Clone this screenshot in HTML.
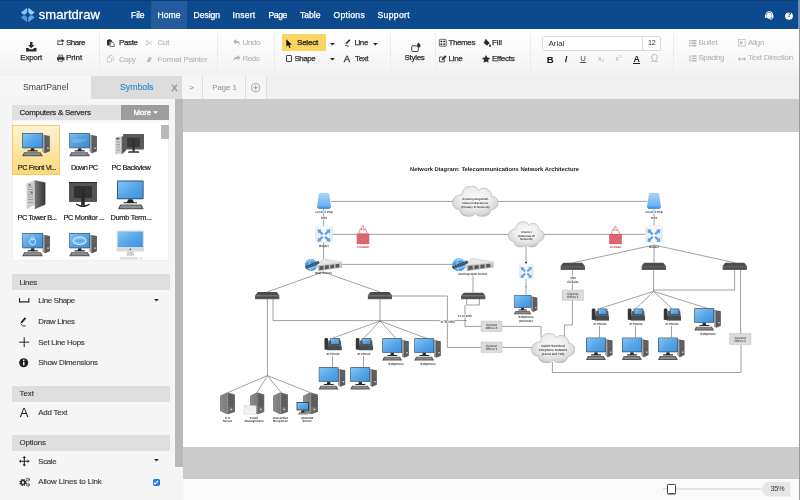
<!DOCTYPE html>
<html lang="en"><head><meta charset="utf-8"><title>SmartDraw - Network Diagram</title>
<style>
html,body{margin:0;padding:0;}
body{width:800px;height:500px;overflow:hidden;position:relative;background:#f5f5f5;font-family:"Liberation Sans",sans-serif;}
.b{position:absolute;display:block;}
.t{position:absolute;white-space:nowrap;}
#root{position:absolute;left:0;top:0;width:800px;height:500px;will-change:transform;}
svg{overflow:visible;}
</style></head><body><div id="root">
<div class="b" style="left:182.6px;top:98.8px;width:617.4px;height:380.2px;background:#cbcbcb;"></div>
<div class="b" style="left:182.6px;top:131.7px;width:616.2px;height:315.4px;background:#fff;"></div>
<div class="b" style="left:182.6px;top:479px;width:617.4px;height:21px;background:#fafafa;"></div>
<div class="b" style="left:663px;top:488.4px;width:101px;height:2px;background:#e3e3e3;"></div>
<div class="b" style="left:667.2px;top:483.8px;width:9px;height:10.4px;background:#fff;border:1px solid #444;border-radius:1.5px;box-sizing:border-box;box-shadow:0 0.5px 1px rgba(0,0,0,.4);"></div>
<svg class="b" style="left:760.5px;top:482.4px" width="29.5" height="14.6" viewBox="0 0 29.5 14.6"><path d="M4.6 0H29.5V14.6H4.6L0 7.3z" fill="#e6e6e6"/></svg>
<div class="t" style="left:770.60px;top:485.16px;font-size:7.4px;line-height:8.88px;color:#333;letter-spacing:-0.404px;">35%</div>
<div class="b" style="left:798.6px;top:28.5px;width:1.4px;height:471.5px;background:#9c9c9c;"></div>
<svg class="b" style="left:0;top:0" width="800" height="500" viewBox="0 0 800 500"><defs>
<linearGradient id="gScr" x1="0" y1="0" x2="1" y2="1"><stop offset="0" stop-color="#86c4f6"/><stop offset="0.5" stop-color="#57a7e8"/><stop offset="1" stop-color="#3f90da"/></linearGradient>
<linearGradient id="gTow2" x1="0" y1="0" x2="1" y2="0"><stop offset="0" stop-color="#7a7a7a"/><stop offset="1" stop-color="#333"/></linearGradient>
<linearGradient id="gTow" x1="0" y1="0" x2="1" y2="0"><stop offset="0" stop-color="#3c3c3c"/><stop offset="0.45" stop-color="#6a6a6a"/><stop offset="1" stop-color="#4a4a4a"/></linearGradient>
<linearGradient id="gSrv" x1="0" y1="0" x2="1" y2="0"><stop offset="0" stop-color="#b5b5b5"/><stop offset="0.45" stop-color="#8a8a8a"/><stop offset="0.5" stop-color="#606060"/><stop offset="1" stop-color="#7d7d7d"/></linearGradient>
<linearGradient id="gCloud" x1="0" y1="0" x2="0" y2="1"><stop offset="0" stop-color="#ffffff"/><stop offset="1" stop-color="#c9c9c9"/></linearGradient>
<linearGradient id="gPop" x1="0" y1="0" x2="0" y2="1"><stop offset="0" stop-color="#aad5fa"/><stop offset="1" stop-color="#5aa8ef"/></linearGradient>
<linearGradient id="gRtr" x1="0" y1="0" x2="1" y2="0"><stop offset="0" stop-color="#e6e9ec"/><stop offset="0.5" stop-color="#fafbfc"/><stop offset="1" stop-color="#e2e6e9"/></linearGradient>
<linearGradient id="gRack" x1="0" y1="0" x2="0" y2="1"><stop offset="0" stop-color="#d2d2d2"/><stop offset="1" stop-color="#a2a2a2"/></linearGradient>
<symbol id="pc" viewBox="0 0 29 25" preserveAspectRatio="none">
 <path d="M21 2.200L28.2 3.500V19L23.400 21.200 21 19.600z" fill="#5a5a5c"/>
 <path d="M21 2.200L22.800 2.500V20.600L21 19.600z" fill="#a4a4a4"/>
 <path d="M23.800 5.200h3.600M23.800 7h3.600M23.800 8.800h3.600M23.800 10.600h3.600" stroke="#707070" stroke-width="0.6"/>
 <rect x="25.500" y="15.300" width="1.500" height="1.300" fill="#d4e8f8"/>
 <rect x="0.300" y="0.400" width="20.800" height="15.600" rx="0.400" fill="#27425e"/>
 <rect x="0.900" y="1" width="19.600" height="14.400" fill="url(#gScr)"/>
 <path d="M9.400 16h2.800l0.700 2.200h3.100v1.200H5.700v-1.200h3z" fill="#2b2b2b"/>
 <path d="M2.200 20.100h16.600l2.400 4.100H0.200z" fill="#555"/>
 <path d="M3 20.800h15l1.300 2.300H1.900z" fill="#8a8a8a"/>
</symbol>
<symbol id="pcdown" viewBox="0 0 29 25" preserveAspectRatio="none">
 <path d="M21 2.200L28.2 3.500V19L23.400 21.200 21 19.600z" fill="#5a5a5c"/>
 <path d="M21 2.200L22.800 2.500V20.600L21 19.600z" fill="#a4a4a4"/>
 <path d="M23.800 5.200h3.600M23.800 7h3.600M23.800 8.800h3.600M23.800 10.600h3.600" stroke="#707070" stroke-width="0.6"/>
 <rect x="25.500" y="15.300" width="1.500" height="1.300" fill="#d4e8f8"/>
 <rect x="0.300" y="0.400" width="20.800" height="15.600" rx="0.400" fill="#3a4f66"/>
 <rect x="0.900" y="1" width="19.600" height="14.400" fill="url(#gScr)" opacity="0.9"/>
 <path d="M3.600 7.600h13M3.600 9.600h9" stroke="#9ccaf0" stroke-width="0.7"/>
 <path d="M9.400 16h2.800l0.700 2.200h3.100v1.200H5.700v-1.200h3z" fill="#2b2b2b"/>
 <path d="M2.200 20.100h16.600l2.400 4.100H0.200z" fill="#555"/>
 <path d="M3 20.800h15l1.300 2.300H1.900z" fill="#8a8a8a"/>
</symbol>

<symbol id="phone" viewBox="0 0 18 13" preserveAspectRatio="none">
 <path d="M4.800 3h12.200l1 9.600H3.600z" fill="#5c5f63"/>
 <path d="M4 8.200h13.600l0.400 4.400H3.600z" fill="#484b4f"/>
 <rect x="6.600" y="0.600" width="9.600" height="6.400" fill="#44484d"/>
 <rect x="7.400" y="1.300" width="8" height="5" fill="url(#gScr)"/>
 <path d="M0.800 1.200c0-1 3.600-1 3.600 0v10.200c0 1-3.600 1-3.600 0z" fill="#33363a"/>
 <path d="M0.400 5.400c-0.600 2 0.600 4 0 6.400" stroke="#c4c4c4" stroke-width="0.600" fill="none"/>
</symbol>
<symbol id="switch" viewBox="0 0 25 7.5" preserveAspectRatio="none">
 <path d="M3 0h19l3 3.6H0z" fill="#4a4c4e"/>
 <rect x="0" y="3.4" width="25" height="4.1" rx="0.4" fill="#5d5f61"/>
 <path d="M1.5 5.6h22" stroke="#3c3c3c" stroke-width="1" stroke-dasharray="1.4 0.5"/>
</symbol>
<symbol id="rack" viewBox="0 0 37.5 12.8" preserveAspectRatio="none">
 <path d="M12 6.600L18 0.300 37.200 3.700 37.200 4.400 12.800 7.400z" fill="#e6e6e6" stroke="#b4b4b4" stroke-width="0.350"/>
 <path d="M12.600 7.200L37.200 4.200V9.200L13.400 12.600z" fill="url(#gRack)"/>
 <path d="M14.600 7.860L18.400 7.390V10.990L14.600 11.530zM20 7.200L23.800 6.730V10.210L20 10.760zM25.400 6.540L29 6.100V9.470L25.400 9.980zM30.600 5.900L34.200 5.460V8.730L30.600 9.240z" fill="#565656"/>
 <circle cx="6.300" cy="6.500" r="6.200" fill="#469fec"/>
 <path d="M1 4.400c2.400-3.400 7-3.800 10-1.200M0.600 8.400c3 2 8.200 2 11.400-0.800M6.300 0.400c-2.600 3-2.600 9.400 0 12.400" stroke="#d4ebfc" stroke-width="0.700" fill="none"/>
 <path d="M0 8.200L13.600 2.400l1 2.400L1 10.600z" fill="#41454a"/>
 <path d="M1.800 8.800l11-4.700" stroke="#b4bcc4" stroke-width="0.500" stroke-dasharray="1 0.600"/>
</symbol>
<symbol id="router" viewBox="0 0 18 18" preserveAspectRatio="none">
 <path d="M0.300 2.200C0.300 -0.200 17.700 -0.200 17.700 2.200V15.800C17.700 18.200 0.300 18.200 0.300 15.800z" fill="url(#gRtr)" stroke="#e2e6ea" stroke-width="0.300"/>
 <ellipse cx="9" cy="2.200" rx="8.600" ry="1.800" fill="#f7f8fa" stroke="#e6e9ec" stroke-width="0.250"/>
 <path d="M7.700 9.300L4.400 6M10.100 9.300L13.400 6M7.700 11.700L4.400 15M10.100 11.700L13.400 15" stroke="#5aa2e6" stroke-width="2.300" fill="none"/>
 <path d="M2.500 4.100l4.200 0.500-3.700 3.700zM15.300 4.100l-4.200 0.500 3.700 3.700zM2.500 16.900l4.200-0.500-3.700-3.700zM15.300 16.900l-4.200-0.500 3.700-3.700z" fill="#5aa2e6"/>
</symbol>
<symbol id="pop" viewBox="0 0 14 16" preserveAspectRatio="none">
 <path d="M2 0.600Q2.200 0 2.800 0h8.400q0.600 0 0.800 0.600L14 13.400q0.200 1-0.600 1.400L12.400 16H1.600L0.600 14.800q-0.800-0.400-0.600-1.400z" fill="url(#gPop)"/>
 <path d="M0.200 13.800h13.600L12.400 16H1.600z" fill="#4a98e4"/>
</symbol>
<symbol id="fw" viewBox="0 0 13 19" preserveAspectRatio="none">
 <path d="M6.400 0.300c1.800 2.200-0.600 3.400 1 5 0.400-1.200 1.400-1.800 1.400-1.800 0 2.200 2.400 3.200 1.400 5.500H2.800C1.800 6.400 3.600 5.400 4 3.600c0.800 0.600 0.800 1.400 0.800 1.400C5.200 3.400 4.800 1.800 6.400 0.300z" fill="#fff" stroke="#dc5560" stroke-width="0.700"/>
 <rect x="0.200" y="8.400" width="12.600" height="10.400" fill="#db4f5b"/>
 <path d="M0.200 10.500h12.600M0.200 12.600h12.600M0.200 14.700h12.600M0.200 16.800h12.600" stroke="#eda3aa" stroke-width="0.320"/>
 <path d="M2.300 8.400v2.100M4.400 8.400v2.100M6.500 8.400v2.100M8.600 8.400v2.100M10.700 8.400v2.100M1.250 10.500v2.100M3.350 10.500v2.100M5.450 10.500v2.100M7.550 10.500v2.100M9.650 10.500v2.100M11.750 10.500v2.100M2.300 12.600v2.100M4.400 12.600v2.100M6.500 12.600v2.100M8.600 12.600v2.100M10.700 12.600v2.100M1.250 14.700v2.100M3.350 14.700v2.100M5.450 14.700v2.100M7.550 14.700v2.100M9.650 14.700v2.100M11.750 14.700v2.100M2.300 16.800v2M4.400 16.800v2M6.500 16.800v2M8.600 16.800v2M10.700 16.800v2" stroke="#eda3aa" stroke-width="0.320"/>
</symbol>
<symbol id="cloud" viewBox="0.300 -0.200 47.100 31.500" preserveAspectRatio="none">
 <path d="M8 24C-1 24 -3 10 10.500 8.800C11 -1.500 25 -2.500 27.300 4.800C30 0.500 40 1.500 40.500 10.500C49 11 49.500 23 39.750 24.300C39 31.500 27 33 24 28C21 32.500 9 32.500 8 24Z" fill="url(#gCloudR)" stroke="#a6a6a6" stroke-width="0.600"/>
</symbol>
<radialGradient id="gCloudR" cx="0.5" cy="0.42" r="0.62"><stop offset="0" stop-color="#fbfbfb"/><stop offset="0.5" stop-color="#efefef"/><stop offset="0.85" stop-color="#d6d6d6"/><stop offset="1" stop-color="#bababa"/></radialGradient>
<symbol id="tower" viewBox="0 0 15 22" preserveAspectRatio="none">
 <path d="M0 3.600L7.400 0.200 7.400 22 0 18.600z" fill="url(#gTwL)"/>
 <path d="M7.400 0.200L15 2.400V19.600L7.400 22z" fill="#6a6a6a"/>
 <path d="M8.600 3.200l5.200 1.400M8.600 5.200l5.200 1.300M8.600 7.200l5.200 1.200M8.600 9.200l5.200 1.100M8.600 11.200l5.200 1M8.600 13.200l5.200 0.900" stroke="#484848" stroke-width="0.800"/>
 <rect x="10.400" y="16.400" width="1.600" height="1.400" fill="#cfd6dc"/>
</symbol>
<linearGradient id="gTwL" x1="0" y1="0" x2="1" y2="0"><stop offset="0" stop-color="#8c8c8c"/><stop offset="1" stop-color="#7a7a7a"/></linearGradient>
</defs>
<path d="M331 201.4 L647 201.4 M333 234.4 L645 234.4 M323.6 209 L323.6 259 M654 209 L654 226 M342 264.4 L453 264.4 M323 272 L267 292 M323 272 L380 292 M473 275.5 L473 292.4 M267.4 299 L267.4 375.6 M267.4 375.6 L228 392.5 M267.4 375.6 L257 392.5 M267.4 375.6 L281 392.5 M267.4 375.6 L310 392.5 M273 299 L273 320.6 L467 320.6 M392 296 L447.4 296 L447.4 347.4 L481 347.4 M380 299 L380 321 M380 321 L333 338 M380 321 L364 338 M380 321 L396 338.5 M380 321 L427 338.5 M466.6 299 L466.6 305 L479.4 305 L479.4 299 M465 305 L465 326.4 L481 326.4 M502 326.4 L541 326.4 L541 337 M502 347.4 L532 347.4 M526 246 L526 264 M526 279 L526 295 M654 245 L573 262.8 M654 245 L654 262.8 M654 245 L735 262.8 M572.4 270 L572.4 290 M572.4 300 L572.4 325 L564.4 325 L564.4 337 M653.6 270 L653.6 291.4 M653.6 290 L734.6 290 L734.6 270 M653.6 291.4 L600 308.5 M653.6 291.4 L636 308.5 M653.6 291.4 L672 308.5 M653.6 291.4 L708 308.5 M740.6 270 L740.6 334 M741 344.6 L741 372.5 L552.4 372.5 L552.4 362 M599.5 326 L599.5 337.5 M635.5 326 L635.5 337.5 M671.5 326 L671.5 337.5 M332.5 356 L332.5 367.5 M363.5 356 L363.5 367.5" fill="none" stroke="#6e6e6e" stroke-width="0.65"/>
<use href="#cloud" x="452" y="185.7" width="46.50" height="31.10"/>
<use href="#cloud" x="507.8" y="221.2" width="36.80" height="26.30"/>
<use href="#cloud" x="531" y="333" width="44.20" height="30.20"/>
<use href="#pop" x="317" y="193" width="14.00" height="16.00"/>
<use href="#pop" x="647" y="193" width="14.00" height="16.00"/>
<use href="#router" x="315" y="225.4" width="18.00" height="17.40"/>
<use href="#router" x="645" y="225.2" width="18.00" height="17.80"/>
<use href="#router" x="518.6" y="263.4" width="15.40" height="15.60"/>
<use href="#fw" x="356.4" y="225" width="13.20" height="19.40"/>
<use href="#fw" x="609" y="225.6" width="13.00" height="18.80"/>
<use href="#rack" x="305" y="258.4" width="37.50" height="12.80"/>
<use href="#rack" x="452" y="258" width="42.00" height="13.20"/>
<use href="#switch" x="255" y="292" width="24.60" height="7.40"/>
<use href="#switch" x="367.6" y="292" width="24.60" height="7.40"/>
<use href="#switch" x="461" y="292.4" width="24.60" height="7.20"/>
<use href="#switch" x="560.4" y="262.6" width="24.60" height="7.40"/>
<use href="#switch" x="641.4" y="262.6" width="24.60" height="7.40"/>
<use href="#switch" x="722.4" y="262.6" width="24.60" height="7.40"/>
<rect x="525.300" y="261.800" width="1.400" height="1.400" fill="#111"/><rect x="525.400" y="286" width="1.200" height="1.200" fill="#5a9a4a"/>
<rect x="481" y="321" width="21.00" height="10.60" fill="#dcdcdc" stroke="#a8a8a8" stroke-width="0.5" stroke-dasharray="0.8 0.5"/>
<rect x="481" y="342" width="21.00" height="10.60" fill="#dcdcdc" stroke="#a8a8a8" stroke-width="0.5" stroke-dasharray="0.8 0.5"/>
<rect x="562" y="290" width="21.60" height="10.40" fill="#dcdcdc" stroke="#a8a8a8" stroke-width="0.5" stroke-dasharray="0.8 0.5"/>
<rect x="729.5" y="333.5" width="21.50" height="11.10" fill="#dcdcdc" stroke="#a8a8a8" stroke-width="0.5" stroke-dasharray="0.8 0.5"/>
<use href="#phone" x="591" y="308" width="18.20" height="12.80"/>
<use href="#phone" x="627" y="308" width="18.20" height="12.80"/>
<use href="#phone" x="663" y="308" width="18.20" height="12.80"/>
<use href="#phone" x="323.6" y="337.6" width="18.20" height="13.00"/>
<use href="#phone" x="355" y="337.6" width="18.20" height="13.00"/>
<use href="#pc" x="585.7" y="337.2" width="27.60" height="23.50"/>
<use href="#pc" x="621.7" y="337.2" width="27.60" height="23.50"/>
<use href="#pc" x="657.7" y="337.2" width="27.60" height="23.50"/>
<use href="#pc" x="694" y="308" width="27.60" height="23.20"/>
<use href="#pc" x="513.6" y="294.6" width="24.40" height="20.40"/>
<use href="#pc" x="382" y="338" width="27.60" height="23.20"/>
<use href="#pc" x="414" y="338" width="27.60" height="23.20"/>
<use href="#pc" x="318.4" y="367" width="27.60" height="23.20"/>
<use href="#pc" x="350" y="367" width="27.60" height="23.20"/>
<use href="#tower" x="220" y="392" width="15.00" height="22.40"/>
<use href="#tower" x="250" y="392" width="14.50" height="22.40"/>
<path d="M244 405.6h12.2v8.600H244z" fill="#f4f4f4" stroke="#c4c4c4" stroke-width="0.4"/><path d="M244 405.600l6.100 4.600 6.100-4.600" fill="none" stroke="#c4c4c4" stroke-width="0.4"/>
<use href="#tower" x="273" y="392" width="15.00" height="22.40"/>
<use href="#tower" x="303" y="392" width="15.00" height="22.40"/>
<rect x="296.6" y="402" width="12.4" height="8.400" fill="#26292c"/><rect x="297.300" y="402.700" width="11" height="7" fill="url(#gScr)"/><path d="M301.600 410.400h2.400l0.800 1.800h1.800v0.600h-7.600v-0.600h1.800z" fill="#222"/><path d="M298.600 413h8.800l1 1.600h-10.800z" fill="#888"/>
<g font-family="Liberation Sans, sans-serif" text-rendering="geometricPrecision" stroke="#fff" stroke-width="1.2" stroke-linejoin="round"><text x="324" y="213.12" font-size="3.1" font-weight="bold" fill="#3a3a3a" text-anchor="middle">Level 3 Pop</text><text x="324" y="219.12" font-size="3.1" font-weight="bold" fill="#3a3a3a" text-anchor="middle">DS3</text><text x="654" y="212.92" font-size="3.1" font-weight="bold" fill="#3a3a3a" text-anchor="middle">Level 3 Pop</text><text x="654" y="218.52" font-size="3.1" font-weight="bold" fill="#3a3a3a" text-anchor="middle">DS3</text><text x="464.5" y="316.72" font-size="3.1" font-weight="bold" fill="#3a3a3a" text-anchor="middle">T1 or DS3</text><text x="447.4" y="322.52" font-size="3.1" font-weight="bold" fill="#3a3a3a" text-anchor="middle">T1 or DS3</text><text x="573" y="279.12" font-size="3.1" font-weight="bold" fill="#3a3a3a" text-anchor="middle">PRI</text><text x="573" y="282.72" font-size="3.1" font-weight="bold" fill="#3a3a3a" text-anchor="middle">Circuits</text></g>
<g font-family="Liberation Sans, sans-serif" text-rendering="geometricPrecision"><text x="491.5" y="325.75" font-size="3.2" font-weight="bold" fill="#505050" text-anchor="middle">Central</text>
<text x="491.5" y="329.35" font-size="3.2" font-weight="bold" fill="#505050" text-anchor="middle">Office 2</text>
<text x="491.5" y="346.75" font-size="3.2" font-weight="bold" fill="#505050" text-anchor="middle">Central</text>
<text x="491.5" y="350.35" font-size="3.2" font-weight="bold" fill="#505050" text-anchor="middle">Office 1</text>
<text x="572.8" y="294.65" font-size="3.2" font-weight="bold" fill="#505050" text-anchor="middle">Central</text>
<text x="572.8" y="298.25" font-size="3.2" font-weight="bold" fill="#505050" text-anchor="middle">Office 1</text>
<text x="740.25" y="338.50" font-size="3.2" font-weight="bold" fill="#505050" text-anchor="middle">Central</text>
<text x="740.25" y="342.10" font-size="3.2" font-weight="bold" fill="#505050" text-anchor="middle">Office 2</text>
<text x="410" y="170.62" font-size="5.6" font-weight="bold" fill="#1a1a1a" text-anchor="start" textLength="169" lengthAdjust="spacingAndGlyphs">Network Diagram: Telecommunications Network Architecture</text>
<text x="324" y="213.12" font-size="3.1" font-weight="bold" fill="#3a3a3a" text-anchor="middle">Level 3 Pop</text>
<text x="324" y="219.12" font-size="3.1" font-weight="bold" fill="#3a3a3a" text-anchor="middle">DS3</text>
<text x="654" y="212.92" font-size="3.1" font-weight="bold" fill="#3a3a3a" text-anchor="middle">Level 3 Pop</text>
<text x="654" y="218.52" font-size="3.1" font-weight="bold" fill="#3a3a3a" text-anchor="middle">DS3</text>
<text x="324" y="246.72" font-size="3.1" font-weight="bold" fill="#3a3a3a" text-anchor="middle">Router</text>
<text x="654" y="247.52" font-size="3.1" font-weight="bold" fill="#3a3a3a" text-anchor="middle">Router</text>
<text x="363" y="247.92" font-size="3.1" font-weight="bold" fill="#b8323e" text-anchor="middle">Firewall</text>
<text x="615.5" y="247.52" font-size="3.1" font-weight="bold" fill="#b8323e" text-anchor="middle">Firewall</text>
<text x="323.5" y="274.12" font-size="3.1" font-weight="bold" fill="#3a3a3a" text-anchor="middle">Web Server</text>
<text x="473" y="275.12" font-size="3.1" font-weight="bold" fill="#3a3a3a" text-anchor="middle">Backup Web Server</text>
<text x="475.4" y="200.44" font-size="2.9" font-weight="bold" fill="#3a3a3a" text-anchor="middle">Existing MegaPath</text>
<text x="475.4" y="204.24" font-size="2.9" font-weight="bold" fill="#3a3a3a" text-anchor="middle">Network Backbone</text>
<text x="475.4" y="207.84" font-size="2.9" font-weight="bold" fill="#3a3a3a" text-anchor="middle">(Primary IP Network)</text>
<text x="526.4" y="233.44" font-size="2.9" font-weight="bold" fill="#3a3a3a" text-anchor="middle">Internet</text>
<text x="526.4" y="236.84" font-size="2.9" font-weight="bold" fill="#3a3a3a" text-anchor="middle">(Alternate IP</text>
<text x="526.4" y="240.24" font-size="2.9" font-weight="bold" fill="#3a3a3a" text-anchor="middle">Network)</text>
<text x="553" y="346.92" font-size="3.1" font-weight="bold" fill="#3a3a3a" text-anchor="middle">Public Switched</text>
<text x="553" y="350.72" font-size="3.1" font-weight="bold" fill="#3a3a3a" text-anchor="middle">Telephone Network</text>
<text x="553" y="354.52" font-size="3.1" font-weight="bold" fill="#3a3a3a" text-anchor="middle">(Local and Toll)</text>
<text x="464.5" y="316.72" font-size="3.1" font-weight="bold" fill="#3a3a3a" text-anchor="middle">T1 or DS3</text>
<text x="447.4" y="322.52" font-size="3.1" font-weight="bold" fill="#3a3a3a" text-anchor="middle">T1 or DS3</text>
<text x="573" y="279.12" font-size="3.1" font-weight="bold" fill="#3a3a3a" text-anchor="middle">PRI</text>
<text x="573" y="282.72" font-size="3.1" font-weight="bold" fill="#3a3a3a" text-anchor="middle">Circuits</text>
<text x="526" y="318.32" font-size="3.1" font-weight="bold" fill="#3a3a3a" text-anchor="middle">Softphone</text>
<text x="526" y="321.72" font-size="3.1" font-weight="bold" fill="#3a3a3a" text-anchor="middle">(Remote)</text>
<text x="600" y="325.12" font-size="3.1" font-weight="bold" fill="#3a3a3a" text-anchor="middle">IP Phone</text>
<text x="636" y="325.12" font-size="3.1" font-weight="bold" fill="#3a3a3a" text-anchor="middle">IP Phone</text>
<text x="672" y="325.12" font-size="3.1" font-weight="bold" fill="#3a3a3a" text-anchor="middle">IP Phone</text>
<text x="333" y="355.12" font-size="3.1" font-weight="bold" fill="#3a3a3a" text-anchor="middle">IP Phone</text>
<text x="364" y="355.12" font-size="3.1" font-weight="bold" fill="#3a3a3a" text-anchor="middle">IP Phone</text>
<text x="396" y="364.52" font-size="3.1" font-weight="bold" fill="#3a3a3a" text-anchor="middle">Softphone</text>
<text x="428" y="364.52" font-size="3.1" font-weight="bold" fill="#3a3a3a" text-anchor="middle">Softphone</text>
<text x="708" y="334.72" font-size="3.1" font-weight="bold" fill="#3a3a3a" text-anchor="middle">Softphone</text>
<text x="227.5" y="418.52" font-size="3.1" font-weight="bold" fill="#3a3a3a" text-anchor="middle">CTI</text>
<text x="227.5" y="421.92" font-size="3.1" font-weight="bold" fill="#3a3a3a" text-anchor="middle">Server</text>
<text x="254" y="418.52" font-size="3.1" font-weight="bold" fill="#3a3a3a" text-anchor="middle">Email</text>
<text x="254" y="421.92" font-size="3.1" font-weight="bold" fill="#3a3a3a" text-anchor="middle">Management</text>
<text x="280.5" y="418.52" font-size="3.1" font-weight="bold" fill="#3a3a3a" text-anchor="middle">Interactive</text>
<text x="280.5" y="421.92" font-size="3.1" font-weight="bold" fill="#3a3a3a" text-anchor="middle">Response</text>
<text x="307" y="418.52" font-size="3.1" font-weight="bold" fill="#3a3a3a" text-anchor="middle">ACD/IVR</text>
<text x="307" y="421.92" font-size="3.1" font-weight="bold" fill="#3a3a3a" text-anchor="middle">Server</text></g>
</svg>
<div class="b" style="left:0px;top:98.5px;width:182.6px;height:401.5px;background:#f5f5f5;"></div>
<div class="b" style="left:175.2px;top:98.5px;width:7.4px;height:368.1px;background:#b9b9b9;"></div>
<div class="b" style="left:12px;top:104.5px;width:109px;height:15.7px;background:#e0e0e0;"></div>
<div class="b" style="left:120.7px;top:104.5px;width:48.5px;height:15.7px;background:#9d9d9d;"></div>
<div class="t" style="left:19.50px;top:107.76px;font-size:7.9px;line-height:9.48px;color:#333;letter-spacing:-0.227px;-webkit-text-stroke:0.25px #333;">Computers &amp; Servers</div>
<div class="t" style="left:133.50px;top:107.72px;font-size:7.8px;line-height:9.36px;color:#fff;letter-spacing:-0.093px;-webkit-text-stroke:0.3px #fff;">More</div>
<svg class="b" style="left:152.6px;top:111px" width="5" height="2.8" viewBox="0 0 10 5"><path d="M0 0h10L5 5z" fill="#fff"/></svg>
<div class="b" style="left:12px;top:120.3px;width:157.2px;height:141px;background:linear-gradient(#f4f4f4,#fff 3.5px);border:1px solid #efefef;border-top:none;box-sizing:border-box;"></div>
<div class="b" style="left:161.3px;top:125.3px;width:7.4px;height:13.4px;background:#b9b9b9;"></div>
<div class="b" style="left:12.3px;top:124.6px;width:47.4px;height:50.4px;background:linear-gradient(#fdf3d3,#fbd97a);border:1px solid #f3c969;box-sizing:border-box;"></div>
<svg class="b" style="left:0;top:0" width="182" height="262" viewBox="0 0 182 262"><defs>
<linearGradient id="gScr" x1="0" y1="0" x2="1" y2="1"><stop offset="0" stop-color="#86c4f6"/><stop offset="0.5" stop-color="#57a7e8"/><stop offset="1" stop-color="#3f90da"/></linearGradient>
<linearGradient id="gTow2" x1="0" y1="0" x2="1" y2="0"><stop offset="0" stop-color="#7a7a7a"/><stop offset="1" stop-color="#333"/></linearGradient>
<linearGradient id="gTow" x1="0" y1="0" x2="1" y2="0"><stop offset="0" stop-color="#3c3c3c"/><stop offset="0.45" stop-color="#6a6a6a"/><stop offset="1" stop-color="#4a4a4a"/></linearGradient>
<linearGradient id="gSrv" x1="0" y1="0" x2="1" y2="0"><stop offset="0" stop-color="#b5b5b5"/><stop offset="0.45" stop-color="#8a8a8a"/><stop offset="0.5" stop-color="#606060"/><stop offset="1" stop-color="#7d7d7d"/></linearGradient>
<linearGradient id="gCloud" x1="0" y1="0" x2="0" y2="1"><stop offset="0" stop-color="#ffffff"/><stop offset="1" stop-color="#c9c9c9"/></linearGradient>
<linearGradient id="gPop" x1="0" y1="0" x2="0" y2="1"><stop offset="0" stop-color="#aad5fa"/><stop offset="1" stop-color="#5aa8ef"/></linearGradient>
<linearGradient id="gRtr" x1="0" y1="0" x2="1" y2="0"><stop offset="0" stop-color="#e6e9ec"/><stop offset="0.5" stop-color="#fafbfc"/><stop offset="1" stop-color="#e2e6e9"/></linearGradient>
<linearGradient id="gRack" x1="0" y1="0" x2="0" y2="1"><stop offset="0" stop-color="#d2d2d2"/><stop offset="1" stop-color="#a2a2a2"/></linearGradient>
<symbol id="pc" viewBox="0 0 29 25" preserveAspectRatio="none">
 <path d="M21 2.200L28.2 3.500V19L23.400 21.200 21 19.600z" fill="#5a5a5c"/>
 <path d="M21 2.200L22.800 2.500V20.600L21 19.600z" fill="#a4a4a4"/>
 <path d="M23.800 5.200h3.600M23.800 7h3.600M23.800 8.800h3.600M23.800 10.600h3.600" stroke="#707070" stroke-width="0.6"/>
 <rect x="25.500" y="15.300" width="1.500" height="1.300" fill="#d4e8f8"/>
 <rect x="0.300" y="0.400" width="20.800" height="15.600" rx="0.400" fill="#27425e"/>
 <rect x="0.900" y="1" width="19.600" height="14.400" fill="url(#gScr)"/>
 <path d="M9.400 16h2.800l0.700 2.200h3.100v1.200H5.700v-1.200h3z" fill="#2b2b2b"/>
 <path d="M2.200 20.100h16.600l2.400 4.100H0.200z" fill="#555"/>
 <path d="M3 20.800h15l1.300 2.300H1.900z" fill="#8a8a8a"/>
</symbol>
<symbol id="pcdown" viewBox="0 0 29 25" preserveAspectRatio="none">
 <path d="M21 2.200L28.2 3.500V19L23.400 21.200 21 19.600z" fill="#5a5a5c"/>
 <path d="M21 2.200L22.800 2.500V20.600L21 19.600z" fill="#a4a4a4"/>
 <path d="M23.800 5.200h3.600M23.800 7h3.600M23.800 8.800h3.600M23.800 10.600h3.600" stroke="#707070" stroke-width="0.6"/>
 <rect x="25.500" y="15.300" width="1.500" height="1.300" fill="#d4e8f8"/>
 <rect x="0.300" y="0.400" width="20.800" height="15.600" rx="0.400" fill="#3a4f66"/>
 <rect x="0.900" y="1" width="19.600" height="14.400" fill="url(#gScr)" opacity="0.9"/>
 <path d="M3.600 7.600h13M3.600 9.600h9" stroke="#9ccaf0" stroke-width="0.7"/>
 <path d="M9.400 16h2.800l0.700 2.200h3.100v1.200H5.700v-1.200h3z" fill="#2b2b2b"/>
 <path d="M2.200 20.100h16.600l2.400 4.100H0.200z" fill="#555"/>
 <path d="M3 20.800h15l1.300 2.300H1.900z" fill="#8a8a8a"/>
</symbol>
</defs>
<use href="#pc" x="21.9" y="132.6" width="28.7" height="24.4"/>
<use href="#pcdown" x="69" y="132.6" width="28.7" height="24.4"/>
<g>
<path d="M115.200 137.200l6.400-1v17.400l-6.400 0.800z" fill="#d2d2d2"/><path d="M121.600 136.200l4.400 0.600v13.800l-4.400 3.800z" fill="#585858"/>
<rect x="116.200" y="137.800" width="3.200" height="1.800" fill="#5a5a5a"/><path d="M116.400 142h3.600M116.400 144.500h3.600M116.400 147h3.600M116.400 150h3.600" stroke="#8c8c8c" stroke-width="0.700"/>
<rect x="123.100" y="133.900" width="20.900" height="15.500" rx="0.500" fill="#5a5a5a"/><rect x="127" y="137.500" width="13" height="9.700" fill="#3a3a3a"/>
<rect x="132.500" y="139" width="2.100" height="12.500" fill="#2c2c2c"/><path d="M128.600 151.200h10l0.700 1.500h-11.400z" fill="#2c2c2c"/></g>
<g>
<path d="M26.600 183.600l8-3.400 0.200 24.600-8.200 4.400z" fill="#cdcdcd"/><path d="M34.600 180.200l10.800 2.400v22l-10.600 4.600z" fill="url(#gTow2)"/>
<path d="M26.600 183.600l8-3.400 10.800 2.400-7.600 2.400z" fill="#8a8a8a" opacity="0.0"/>
<path d="M28 187h5M28 189.500h5M28 192h5M28 194.500h5M28 197h5M28 199.500h5M28 202.500h5" stroke="#8a8a8a" stroke-width="0.700"/>
<rect x="28.600" y="184.200" width="2.200" height="1.600" fill="#777"/><circle cx="31.800" cy="192.500" r="1.100" fill="#666"/></g>
<g>
<rect x="69" y="182.100" width="28" height="19.800" rx="0.600" fill="#555"/><rect x="69" y="182.100" width="28" height="1" fill="#2a2a2a"/><rect x="74" y="186" width="18" height="12" fill="#333"/>
<rect x="81.200" y="188" width="3.600" height="17.600" fill="#2b2b2b"/><path d="M76.200 203.600q3.400 1.600 5 1.600h3.600q1.600 0 4.800-1.600l0.300 1q-3.300 2.400-5.100 2.400h-3.600q-1.800 0-5.300-2.400z" fill="#2b2b2b"/></g>
<g>
<rect x="117" y="180.600" width="26.600" height="18.600" rx="0.600" fill="#27425e"/><rect x="117.800" y="181.400" width="25" height="17" fill="url(#gScr)"/>
<path d="M128.400 199.200h4l1.600 3h3v1.100h-13.400v-1.100h3.200z" fill="#222"/>
<path d="M120.2 204.600h21.200l2.400 4.600h-26z" fill="#5a5a5a"/><path d="M121.200 205.500h19.200l1.400 2.600h-22z" fill="#8e8e8e"/></g>
<use href="#pc" x="22" y="232.600" width="28.7" height="24.4"/>
<circle cx="32.6" cy="241.800" r="3" fill="none" stroke="#cfe6fa" stroke-width="1"/><circle cx="32.6" cy="238.400" r="1.4" fill="none" stroke="#cfe6fa" stroke-width="0.8"/>
<use href="#pc" x="69" y="232.600" width="28.7" height="24.4"/>
<ellipse cx="79.6" cy="240.800" rx="6.4" ry="3.6" fill="none" stroke="#d8e9f8" stroke-width="1.3"/><ellipse cx="79.6" cy="240.800" rx="4.2" ry="2" fill="none" stroke="#b8d4ee" stroke-width="0.7"/>
<g>
<rect x="116.6" y="230.4" width="27.4" height="21" rx="1" fill="#d9dadb"/><rect x="117.8" y="231.6" width="25" height="15.4" fill="url(#gScr)"/>
<circle cx="130.3" cy="249.2" r="0.8" fill="#444"/>
<path d="M127.4 251.4h5.8l1 4.4h-7.8z" fill="#cfcfcf"/><path d="M121 257.2h16.4l0.8 2h-18z" fill="#e2e2e2" stroke="#bbb" stroke-width="0.3"/>
<ellipse cx="141.2" cy="258.2" rx="1.4" ry="1" fill="#e8e8e8" stroke="#bbb" stroke-width="0.3"/></g>
</svg>
<div class="t" style="left:17.80px;top:163.76px;font-size:7.4px;line-height:8.88px;color:#222;letter-spacing:-0.420px;-webkit-text-stroke:0.2px #222;">PC Front Vi...</div>
<div class="t" style="left:70.90px;top:163.76px;font-size:7.4px;line-height:8.88px;color:#222;letter-spacing:-0.665px;-webkit-text-stroke:0.2px #222;">Down PC</div>
<div class="t" style="left:111.40px;top:163.76px;font-size:7.4px;line-height:8.88px;color:#222;letter-spacing:-0.399px;-webkit-text-stroke:0.2px #222;">PC Backview</div>
<div class="t" style="left:17.60px;top:213.76px;font-size:7.4px;line-height:8.88px;color:#222;letter-spacing:-0.469px;-webkit-text-stroke:0.2px #222;">PC Tower B...</div>
<div class="t" style="left:63.40px;top:213.76px;font-size:7.4px;line-height:8.88px;color:#222;letter-spacing:-0.288px;-webkit-text-stroke:0.2px #222;">PC Monitor ...</div>
<div class="t" style="left:110.40px;top:213.76px;font-size:7.4px;line-height:8.88px;color:#222;letter-spacing:-0.256px;-webkit-text-stroke:0.2px #222;">Dumb Term...</div>
<div class="b" style="left:12px;top:274.2px;width:158px;height:16px;background:#dedede;"></div>
<div class="t" style="left:19.50px;top:277.66px;font-size:7.9px;line-height:9.48px;color:#333;letter-spacing:-0.297px;-webkit-text-stroke:0.12px #333;">Lines</div>
<div class="b" style="left:12px;top:385.6px;width:158px;height:16px;background:#dedede;"></div>
<div class="t" style="left:19.50px;top:389.06px;font-size:7.9px;line-height:9.48px;color:#333;letter-spacing:-0.022px;-webkit-text-stroke:0.12px #333;">Text</div>
<div class="b" style="left:12px;top:435px;width:158px;height:16px;background:#dedede;"></div>
<div class="t" style="left:19.50px;top:438.46px;font-size:7.9px;line-height:9.48px;color:#333;letter-spacing:-0.118px;-webkit-text-stroke:0.12px #333;">Options</div>
<div class="t" style="left:38.30px;top:296.46px;font-size:7.9px;line-height:9.48px;color:#3a3a3a;letter-spacing:-0.338px;-webkit-text-stroke:0.15px #3a3a3a;">Line Shape</div>
<div class="t" style="left:38.30px;top:317.06px;font-size:7.9px;line-height:9.48px;color:#3a3a3a;letter-spacing:-0.312px;-webkit-text-stroke:0.15px #3a3a3a;">Draw Lines</div>
<div class="t" style="left:38.30px;top:337.76px;font-size:7.9px;line-height:9.48px;color:#3a3a3a;letter-spacing:-0.264px;-webkit-text-stroke:0.15px #3a3a3a;">Set Line Hops</div>
<div class="t" style="left:38.30px;top:358.36px;font-size:7.9px;line-height:9.48px;color:#3a3a3a;letter-spacing:-0.242px;-webkit-text-stroke:0.15px #3a3a3a;">Show Dimensions</div>
<div class="t" style="left:38.30px;top:407.86px;font-size:7.9px;line-height:9.48px;color:#3a3a3a;letter-spacing:-0.200px;-webkit-text-stroke:0.15px #3a3a3a;">Add Text</div>
<div class="t" style="left:38.30px;top:456.76px;font-size:7.9px;line-height:9.48px;color:#3a3a3a;letter-spacing:-0.352px;-webkit-text-stroke:0.15px #3a3a3a;">Scale</div>
<div class="t" style="left:38.30px;top:477.36px;font-size:7.9px;line-height:9.48px;color:#3a3a3a;letter-spacing:-0.102px;-webkit-text-stroke:0.15px #3a3a3a;">Allow Lines to Link</div>
<svg class="b" style="left:18.6px;top:298.4px" width="10.4" height="4.6" viewBox="0 0 21 9"><path d="M1 0v7.6h19V0" fill="none" stroke="#222" stroke-width="2.2"/></svg>
<svg class="b" style="left:19.4px;top:316.6px" width="9" height="10" viewBox="0 0 18 20">
<path d="M11.5 0.5l3 2.6-7.6 8.4-3.4 1 0.6-3.6z" fill="#222"/><path d="M3 13.5l4.6 4.4h5.6" fill="none" stroke="#222" stroke-width="1.8"/></svg>
<svg class="b" style="left:18.8px;top:337.2px" width="10.4" height="10.4" viewBox="0 0 21 21">
<path d="M10.5 0.5v7.5M10.5 13v7.5M0.5 10.5h7.5M13 10.5h7.5" stroke="#222" stroke-width="2"/><circle cx="10.5" cy="10.5" r="2.2" fill="#222"/></svg>
<svg class="b" style="left:19.4px;top:358.4px" width="9.4" height="9.4" viewBox="0 0 19 19"><circle cx="9.5" cy="9.5" r="9.2" fill="#222"/><rect x="8.2" y="8" width="2.8" height="7" fill="#fff"/><circle cx="9.6" cy="4.8" r="1.7" fill="#fff"/></svg>
<div class="t" style="left:19.66px;top:404.60px;font-size:13px;line-height:15.60px;color:#222;">A</div>
<svg class="b" style="left:18.6px;top:456.2px" width="10.6" height="10.6" viewBox="0 0 21 21">
<path d="M10.5 0l3.4 4h-2.3v5.4H17V7.1l4 3.4-4 3.4v-2.3h-5.4V17h2.3l-3.4 4-3.4-4h2.3v-5.4H4v2.3l-4-3.4 4-3.4v2.3h5.4V4H7.1z" fill="#222"/></svg>
<svg class="b" style="left:18.8px;top:477px" width="11.4" height="10" viewBox="0 0 23 20">
<circle cx="8" cy="11" r="5.6" fill="none" stroke="#222" stroke-width="3.2" stroke-dasharray="2.9 1.5"/><circle cx="8" cy="11" r="3.6" fill="none" stroke="#222" stroke-width="2.4"/>
<circle cx="18" cy="5" r="2.6" fill="none" stroke="#222" stroke-width="2.4" stroke-dasharray="1.6 1"/><circle cx="18" cy="15.6" r="2.6" fill="none" stroke="#222" stroke-width="2.4" stroke-dasharray="1.6 1"/></svg>
<svg class="b" style="left:154.4px;top:299.0px" width="4.8" height="2.4" viewBox="0 0 10 5"><path d="M0 0h10L5 5z" fill="#222"/></svg>
<svg class="b" style="left:154.4px;top:459.0px" width="4.8" height="2.4" viewBox="0 0 10 5"><path d="M0 0h10L5 5z" fill="#222"/></svg>
<div class="b" style="left:152.6px;top:478.6px;width:7.2px;height:7.2px;background:#2a86e8;border-radius:1.5px;border:0.5px solid #1f6fcb;box-sizing:border-box;"></div>
<svg class="b" style="left:153.4px;top:479.6px" width="5.6" height="5.2" viewBox="0 0 11 10"><path d="M1.5 5.2l2.8 2.8 5.4-6.4" fill="none" stroke="#fff" stroke-width="2"/></svg>
<div class="b" style="left:0px;top:0px;width:800px;height:28.5px;background:#0d498d;border-top:1px solid #0a3d79;box-sizing:border-box;"></div>
<div class="b" style="left:150.5px;top:1px;width:36.5px;height:27.5px;background:#235b9d;"></div>
<svg class="b" style="left:0;top:0" width="60" height="28" viewBox="0 0 60 28">
<path d="M27.2 7.7L20.8 12.4 23.3 14.6H25.4L27.2 12.3z" fill="#7fc6f8"/>
<path d="M28.3 7.7L34.7 12.4 32.2 14.6H30.1L28.3 12.3z" fill="#92d2fb"/>
<path d="M27.2 22.3L20.8 17.6 23.3 15.4H25.4L27.2 17.700z" fill="#4c9ddf"/>
<path d="M28.3 22.3L34.7 17.6 32.2 15.4H30.1L28.3 17.700z" fill="#5eaae8"/>
</svg>
<div class="t" style="left:38.80px;top:7.40px;font-size:13px;line-height:15.60px;color:#fff;letter-spacing:0.058px;-webkit-text-stroke:0.3px #fff;">smartdraw</div>
<div class="t" style="left:131.00px;top:10.04px;font-size:8.6px;line-height:10.32px;color:#fff;letter-spacing:-0.090px;-webkit-text-stroke:0.25px #fff;">File</div>
<div class="t" style="left:157.50px;top:10.04px;font-size:8.6px;line-height:10.32px;color:#fff;letter-spacing:0.015px;-webkit-text-stroke:0.25px #fff;">Home</div>
<div class="t" style="left:193.50px;top:10.04px;font-size:8.6px;line-height:10.32px;color:#fff;letter-spacing:-0.045px;-webkit-text-stroke:0.25px #fff;">Design</div>
<div class="t" style="left:232.50px;top:10.04px;font-size:8.6px;line-height:10.32px;color:#fff;letter-spacing:0.249px;-webkit-text-stroke:0.25px #fff;">Insert</div>
<div class="t" style="left:268.50px;top:10.04px;font-size:8.6px;line-height:10.32px;color:#fff;letter-spacing:-0.396px;-webkit-text-stroke:0.25px #fff;">Page</div>
<div class="t" style="left:300.00px;top:10.04px;font-size:8.6px;line-height:10.32px;color:#fff;letter-spacing:-0.012px;-webkit-text-stroke:0.25px #fff;">Table</div>
<div class="t" style="left:333.50px;top:10.04px;font-size:8.6px;line-height:10.32px;color:#fff;letter-spacing:0.266px;-webkit-text-stroke:0.25px #fff;">Options</div>
<div class="t" style="left:377.50px;top:10.04px;font-size:8.6px;line-height:10.32px;color:#fff;letter-spacing:0.340px;-webkit-text-stroke:0.25px #fff;">Support</div>
<svg class="b" style="left:763.6px;top:11px" width="10.4" height="9.4" viewBox="0 0 13 12">
<path d="M2.2 6.600 V5.4 A4.3 4.3 0 0 1 10.8 5.400 V6.600" fill="none" stroke="#fff" stroke-width="1.3"/>
<ellipse cx="6.5" cy="6.2" rx="3.3" ry="3.900" fill="#fff"/>
<rect x="1.1" y="5.2" width="2.100" height="3.6" rx="0.8" fill="#fff"/><rect x="9.8" y="5.2" width="2.100" height="3.6" rx="0.8" fill="#fff"/>
<path d="M10.8 8.600 Q10.8 10.900 7.5 11" fill="none" stroke="#fff" stroke-width="0.9"/>
</svg>
<svg class="b" style="left:785.2px;top:11.7px" width="8" height="8" viewBox="0 0 12 12">
<circle cx="6" cy="6" r="5.800" fill="#fff"/></svg>
<div class="t" style="left:786.94px;top:11.46px;font-size:7.4px;line-height:8.88px;color:#0a2a55;font-weight:bold;">?</div>
<div class="b" style="left:0px;top:28.5px;width:800px;height:48px;background:linear-gradient(#ffffff,#fbfbfb 40%,#f1f1f1);border-bottom:1px solid #c6c6c6;box-sizing:border-box;"></div>
<div class="b" style="left:98.5px;top:33px;width:1px;height:39px;background:#ebebeb;"></div>
<div class="b" style="left:216.5px;top:33px;width:1px;height:39px;background:#ebebeb;"></div>
<div class="b" style="left:273.5px;top:33px;width:1px;height:39px;background:#ebebeb;"></div>
<div class="b" style="left:390.0px;top:33px;width:1px;height:39px;background:#ebebeb;"></div>
<div class="b" style="left:434.5px;top:33px;width:1px;height:39px;background:#ebebeb;"></div>
<div class="b" style="left:529.5px;top:33px;width:1px;height:39px;background:#ebebeb;"></div>
<div class="b" style="left:673.0px;top:33px;width:1px;height:39px;background:#ebebeb;"></div>
<svg class="b" style="left:26px;top:41.5px" width="10.5" height="9.6" viewBox="0 0 21 19">
<path d="M8 0h5v6h4l-6.5 6.5L4 6h4z" fill="#2e2e2e"/><path d="M0 12h5l2 2.5h7l2-2.5h5v7H0z" fill="#2e2e2e"/></svg>
<div class="t" style="left:20.30px;top:52.90px;font-size:8px;line-height:9.60px;color:#2e2e2e;letter-spacing:-0.237px;-webkit-text-stroke:0.25px #2e2e2e;">Export</div>
<svg class="b" style="left:57px;top:39.3px" width="7.4" height="6" viewBox="0 0 15 12">
<path d="M1 3h5v1.6H2.6v5.8h7.8V8.2H12V12H1z" fill="#2e2e2e"/><path d="M9.5 0L15 3.4 9.5 6.8V4.6C7 4.6 5.6 5.6 4.6 7.6 4.8 4.4 6.6 2.4 9.5 2.2z" fill="#2e2e2e"/></svg>
<div class="t" style="left:65.90px;top:37.70px;font-size:8px;line-height:9.60px;color:#2e2e2e;letter-spacing:-0.470px;-webkit-text-stroke:0.25px #2e2e2e;">Share</div>
<svg class="b" style="left:57px;top:54.8px" width="7.4" height="6.6" viewBox="0 0 15 13">
<path d="M3.5 0h8v4h-8z" fill="none" stroke="#2e2e2e" stroke-width="1.4"/><path d="M0 4.5h15v6h-2.6V8H2.6v2.5H0z" fill="#2e2e2e"/><rect x="3.4" y="9" width="8.2" height="3.4" fill="none" stroke="#2e2e2e" stroke-width="1.3"/></svg>
<div class="t" style="left:65.90px;top:53.40px;font-size:8px;line-height:9.60px;color:#2e2e2e;letter-spacing:-0.050px;-webkit-text-stroke:0.25px #2e2e2e;">Print</div>
<svg class="b" style="left:107.1px;top:39.2px" width="7.5" height="7.5" viewBox="0 0 17 17">
<path d="M0 2h3V0.5h5V2h3v4H6v9H0z" fill="#2e2e2e"/><path d="M7.3 7.3h6l3 3V17h-9z" fill="none" stroke="#2e2e2e" stroke-width="1.5"/></svg>
<div class="t" style="left:119.00px;top:38.30px;font-size:8px;line-height:9.60px;color:#2e2e2e;letter-spacing:-0.371px;-webkit-text-stroke:0.25px #2e2e2e;">Paste</div>
<svg class="b" style="left:107.1px;top:55.3px" width="7.5" height="7.5" viewBox="0 0 17 17">
<path d="M5.5 0.8h6l3 3v8h-9z" fill="none" stroke="#b4b4b4" stroke-width="1.4"/><path d="M0.8 5h6l3 3v8h-9z" fill="#fafafa" stroke="#b4b4b4" stroke-width="1.4"/></svg>
<div class="t" style="left:119.00px;top:54.60px;font-size:8px;line-height:9.60px;color:#b4b4b4;letter-spacing:-0.519px;-webkit-text-stroke:0.1px #b4b4b4;">Copy</div>
<svg class="b" style="left:145px;top:40.4px" width="7.8" height="5.6" viewBox="0 0 17 15">
<circle cx="3" cy="3" r="2.2" fill="none" stroke="#b4b4b4" stroke-width="1.5"/><circle cx="3" cy="12" r="2.2" fill="none" stroke="#b4b4b4" stroke-width="1.5"/>
<path d="M4.8 4.4L16.5 12.5M4.8 10.6L16.5 2.5" stroke="#b4b4b4" stroke-width="1.5"/></svg>
<div class="t" style="left:157.50px;top:38.30px;font-size:8px;line-height:9.60px;color:#b4b4b4;letter-spacing:-0.283px;-webkit-text-stroke:0.1px #b4b4b4;">Cut</div>
<svg class="b" style="left:145.6px;top:55.8px" width="7.2" height="6.4" viewBox="0 0 17 17">
<path d="M8 1l7 5-2.2 3L5.8 4z" fill="#b4b4b4"/><path d="M5 5.5l6.6 4.7-1 5.4-9.6 0.2z" fill="#b4b4b4"/></svg>
<div class="t" style="left:157.50px;top:54.60px;font-size:8px;line-height:9.60px;color:#b4b4b4;letter-spacing:-0.208px;-webkit-text-stroke:0.1px #b4b4b4;">Format Painter</div>
<svg class="b" style="left:233px;top:39.2px" width="7.6" height="6.6" viewBox="0 0 15 13">
<path d="M6 0v3.2c5 0 8.4 2.6 8.6 9.4-1.6-3.6-4-5-8.6-5V11L0 5.5z" fill="#b4b4b4"/></svg>
<div class="t" style="left:242.50px;top:38.05px;font-size:8px;line-height:9.60px;color:#b4b4b4;letter-spacing:-0.381px;-webkit-text-stroke:0.1px #b4b4b4;">Undo</div>
<svg class="b" style="left:233px;top:54.8px" width="7.6" height="6.6" viewBox="0 0 15 13">
<path d="M9 0v3.2c-5 0-8.4 2.6-8.6 9.4 1.6-3.6 4-5 8.6-5V11L15 5.5z" fill="#b4b4b4"/></svg>
<div class="t" style="left:242.50px;top:53.55px;font-size:8px;line-height:9.60px;color:#b4b4b4;letter-spacing:-0.631px;-webkit-text-stroke:0.1px #b4b4b4;">Redo</div>
<div class="b" style="left:282.2px;top:34.2px;width:43.6px;height:16.6px;background:#fbd464;border-radius:1px;"></div>
<svg class="b" style="left:286px;top:38.6px" width="6.4" height="9.2" viewBox="0 0 9 13">
<path d="M0.5 0.3v10.6l2.5-2.3 1.7 4 1.7-0.7-1.7-3.9H8.3z" fill="#111"/></svg>
<div class="t" style="left:297.00px;top:38.05px;font-size:8px;line-height:9.60px;color:#111;letter-spacing:-0.206px;-webkit-text-stroke:0.25px #111;">Select</div>
<svg class="b" style="left:330.1px;top:43.199999999999996px" width="4.8" height="2.4" viewBox="0 0 10 5"><path d="M0 0h10L5 5z" fill="#222"/></svg>
<svg class="b" style="left:330.1px;top:58.4px" width="4.8" height="2.4" viewBox="0 0 10 5"><path d="M0 0h10L5 5z" fill="#222"/></svg>
<svg class="b" style="left:373.1px;top:42.8px" width="4.8" height="2.4" viewBox="0 0 10 5"><path d="M0 0h10L5 5z" fill="#222"/></svg>
<div class="b" style="left:286px;top:55.4px;width:6.2px;height:6.2px;background:#fff;border:0.8px solid #444;box-sizing:border-box;border-radius:1px;"></div>
<div class="t" style="left:294.50px;top:53.95px;font-size:8px;line-height:9.60px;color:#2e2e2e;letter-spacing:-0.507px;-webkit-text-stroke:0.25px #2e2e2e;">Shape</div>
<svg class="b" style="left:343.6px;top:39px" width="7" height="7.4" viewBox="0 0 14 15">
<path d="M10.5 0.5l2.5 2.2-6.8 7-3 0.8 0.6-3z" fill="#2e2e2e"/><path d="M2 12.8h4.5V15H9" fill="none" stroke="#2e2e2e" stroke-width="1.5"/></svg>
<div class="t" style="left:354.50px;top:37.70px;font-size:8px;line-height:9.60px;color:#2e2e2e;letter-spacing:-0.431px;-webkit-text-stroke:0.25px #2e2e2e;">Line</div>
<div class="t" style="left:343.80px;top:52.84px;font-size:9.6px;line-height:11.52px;color:#2e2e2e;-webkit-text-stroke:0.3px #2e2e2e;">A</div>
<div class="t" style="left:355.00px;top:53.80px;font-size:8px;line-height:9.60px;color:#2e2e2e;letter-spacing:-0.368px;-webkit-text-stroke:0.25px #2e2e2e;">Text</div>
<svg class="b" style="left:410.8px;top:42.4px" width="10.6" height="10.6" viewBox="0 0 24 25">
<rect x="1.2" y="9" width="15.5" height="13.5" rx="2.5" fill="none" stroke="#2e2e2e" stroke-width="2.2"/>
<path d="M17.5 0.5c2.5 3 5 5.6 5 8.6a5 5 0 0 1-10 0c0-3 2.5-5.6 5-8.6z" fill="#2e2e2e" stroke="#fafafa" stroke-width="1.2"/></svg>
<div class="t" style="left:404.50px;top:53.30px;font-size:8px;line-height:9.60px;color:#2e2e2e;letter-spacing:-0.298px;-webkit-text-stroke:0.25px #2e2e2e;">Styles</div>
<svg class="b" style="left:439px;top:39.2px" width="7.6" height="7.6" viewBox="0 0 15 15">
<rect x="0.7" y="0.7" width="13.6" height="13.6" rx="1.5" fill="none" stroke="#2e2e2e" stroke-width="1.4"/>
<circle cx="4.7" cy="4.7" r="1.9" fill="#2e2e2e"/><circle cx="10.3" cy="4.7" r="1.9" fill="#2e2e2e"/><circle cx="4.7" cy="10.3" r="1.9" fill="#2e2e2e"/><circle cx="10.3" cy="10.3" r="1.9" fill="#2e2e2e"/></svg>
<div class="t" style="left:448.50px;top:38.30px;font-size:8px;line-height:9.60px;color:#2e2e2e;letter-spacing:-0.400px;-webkit-text-stroke:0.25px #2e2e2e;">Themes</div>
<svg class="b" style="left:439px;top:55px" width="7.8" height="7.4" viewBox="0 0 15 14">
<path d="M10.5 8.5V13H1V3.8h6" fill="none" stroke="#2e2e2e" stroke-width="1.5"/><path d="M11.5 0.5l3 2.6-6.3 6.4-3 0.6 0.4-3z" fill="#2e2e2e"/></svg>
<div class="t" style="left:448.50px;top:54.35px;font-size:8px;line-height:9.60px;color:#2e2e2e;letter-spacing:-0.281px;-webkit-text-stroke:0.25px #2e2e2e;">Line</div>
<svg class="b" style="left:482.5px;top:38.6px" width="8" height="8.6" viewBox="0 0 16 17">
<path d="M6 0.5l7.5 7.3-5.6 5.8L1 7.2z" fill="#2e2e2e"/><path d="M5.4 0v5" stroke="#2e2e2e" stroke-width="1.6"/><path d="M14 10c1 1.6 2 2.8 2 4a2 2 0 0 1-4 0c0-1.2 1-2.4 2-4z" fill="#2e2e2e"/></svg>
<div class="t" style="left:492.00px;top:38.30px;font-size:8px;line-height:9.60px;color:#2e2e2e;letter-spacing:-0.055px;-webkit-text-stroke:0.25px #2e2e2e;">Fill</div>
<svg class="b" style="left:482.3px;top:55px" width="8.2" height="7.8" viewBox="0 0 20 19">
<path d="M10 0l3.1 6.3 6.9 1-5 4.9 1.2 6.8L10 15.8 3.8 19 5 12.2 0 7.3l6.9-1z" fill="#2e2e2e"/></svg>
<div class="t" style="left:492.00px;top:54.35px;font-size:8px;line-height:9.60px;color:#2e2e2e;letter-spacing:-0.258px;-webkit-text-stroke:0.25px #2e2e2e;">Effects</div>
<div class="b" style="left:542px;top:35.8px;width:118.8px;height:15px;background:#fff;border:1px solid #d9d9d9;box-sizing:border-box;border-radius:1.5px;"></div>
<div class="b" style="left:642px;top:36.3px;width:1px;height:14px;background:#dcdcdc;"></div>
<div class="t" style="left:548.50px;top:39.20px;font-size:8px;line-height:9.60px;color:#2e2e2e;letter-spacing:-0.001px;">Arial</div>
<div class="t" style="left:648.00px;top:39.38px;font-size:7.2px;line-height:8.64px;color:#2e2e2e;letter-spacing:-0.304px;">12</div>
<div class="t" style="left:546.73px;top:53.64px;font-size:9.6px;line-height:11.52px;color:#111;font-weight:bold;">B</div>
<div class="t" style="left:564.72px;top:53.88px;font-size:9.2px;line-height:11.04px;color:#111;font-style:italic;-webkit-text-stroke:0.25px #111;">I</div>
<div class="t" style="left:580.18px;top:54.32px;font-size:7.8px;line-height:9.36px;color:#444;text-decoration:underline;text-underline-offset:1px;">U</div>
<div class="t" style="left:598.00px;top:55.32px;font-size:6.8px;line-height:8.16px;color:#aaa;">x</div>
<div class="t" style="left:601.60px;top:59.00px;font-size:4px;line-height:4.80px;color:#aaa;">2</div>
<div class="t" style="left:615.50px;top:55.32px;font-size:6.8px;line-height:8.16px;color:#aaa;">x</div>
<div class="t" style="left:619.20px;top:54.80px;font-size:4px;line-height:4.80px;color:#aaa;">2</div>
<div class="t" style="left:633.42px;top:53.72px;font-size:8.8px;line-height:10.56px;color:#222;font-weight:bold;">A</div>
<div class="b" style="left:632.8px;top:62.8px;width:7.6px;height:1px;background:#222;"></div>
<div class="t" style="left:650.78px;top:53.00px;font-size:10px;line-height:12.00px;color:#b8b8b8;font-family:"Liberation Serif",serif;">Ω</div>
<svg class="b" style="left:688.5px;top:39.6px" width="7.6" height="6.4" viewBox="0 0 15 13">
<g fill="#b4b4b4"><rect x="0" y="0" width="3" height="3"/><rect x="0" y="5" width="3" height="3"/><rect x="0" y="10" width="3" height="3"/>
<rect x="4.5" y="0" width="10.5" height="3"/><rect x="4.5" y="5" width="10.5" height="3"/><rect x="4.5" y="10" width="10.5" height="3"/></g></svg>
<div class="t" style="left:698.50px;top:38.40px;font-size:8px;line-height:9.60px;color:#b4b4b4;letter-spacing:-0.169px;-webkit-text-stroke:0.1px #b4b4b4;">Bullet</div>
<svg class="b" style="left:688.5px;top:55.2px" width="7.6" height="6.8" viewBox="0 0 15 13">
<g fill="#b4b4b4"><path d="M2 0l2 2.6H2.8v7.8H4L2 13 0 10.4h1.2V2.6H0z"/>
<rect x="5.5" y="0.5" width="9.5" height="2.6"/><rect x="5.5" y="5.2" width="9.5" height="2.6"/><rect x="5.5" y="9.9" width="9.5" height="2.6"/></g></svg>
<div class="t" style="left:698.50px;top:53.40px;font-size:8px;line-height:9.60px;color:#b4b4b4;letter-spacing:-0.487px;-webkit-text-stroke:0.1px #b4b4b4;">Spacing</div>
<svg class="b" style="left:738px;top:39.2px" width="7.6" height="7.4" viewBox="0 0 15 15">
<rect x="0.7" y="0.7" width="13.6" height="13.6" fill="none" stroke="#b4b4b4" stroke-width="1.4"/><path d="M4 3.5l6 4-6 4z" fill="#b4b4b4"/></svg>
<div class="t" style="left:748.00px;top:38.40px;font-size:8px;line-height:9.60px;color:#b4b4b4;letter-spacing:-0.358px;-webkit-text-stroke:0.1px #b4b4b4;">Align</div>
<svg class="b" style="left:738px;top:56.6px" width="7.8" height="4" viewBox="0 0 16 8">
<path d="M0 4l4-4v3h8V0l4 4-4 4V5H4v3z" fill="#b4b4b4"/></svg>
<div class="t" style="left:748.00px;top:53.40px;font-size:8px;line-height:9.60px;color:#b4b4b4;letter-spacing:-0.247px;-webkit-text-stroke:0.1px #b4b4b4;">Text Direction</div>
<div class="b" style="left:0px;top:76.4px;width:800px;height:22.4px;background:#efefef;"></div>
<div class="b" style="left:0px;top:76.4px;width:91px;height:22.4px;background:#f6f6f6;"></div>
<div class="b" style="left:91px;top:76.4px;width:91.3px;height:22.4px;background:#dcdcdc;"></div>
<div class="t" style="left:23.00px;top:82.38px;font-size:8.7px;line-height:10.44px;color:#444;letter-spacing:0.004px;">SmartPanel</div>
<div class="t" style="left:120.00px;top:82.38px;font-size:8.7px;line-height:10.44px;color:#2a8bd2;letter-spacing:0.020px;-webkit-text-stroke:0.15px #2a8bd2;">Symbols</div>
<div class="t" style="left:171.50px;top:82.60px;font-size:9px;line-height:10.80px;color:#9a9a9a;font-weight:bold;-webkit-text-stroke:0.3px #9a9a9a;">X</div>
<div class="b" style="left:182.3px;top:76.4px;width:84.2px;height:22.4px;background:#f5f5f5;"></div>
<div class="b" style="left:202.0px;top:76.4px;width:1px;height:22.4px;background:#dedede;"></div>
<div class="b" style="left:245.0px;top:76.4px;width:1px;height:22.4px;background:#dedede;"></div>
<div class="b" style="left:266.0px;top:76.4px;width:1px;height:22.4px;background:#dedede;"></div>
<div class="t" style="left:189.36px;top:83.30px;font-size:8px;line-height:9.60px;color:#777;">&gt;</div>
<div class="t" style="left:212.30px;top:82.86px;font-size:7.9px;line-height:9.48px;color:#909090;letter-spacing:-0.107px;">Page 1</div>
<svg class="b" style="left:251px;top:83px" width="9.4" height="9.4" viewBox="0 0 19 19">
<circle cx="9.5" cy="9.5" r="8.3" fill="none" stroke="#8a8a8a" stroke-width="1.5"/><path d="M9.5 4.6v9.8M4.6 9.5h9.8" stroke="#8a8a8a" stroke-width="1.5"/></svg>
<div class="b" style="left:798.4px;top:0px;width:1.6px;height:28.5px;background:#6f93bd;"></div>
<div class="b" style="left:798.6px;top:28.5px;width:1.4px;height:70.3px;background:#9c9c9c;"></div>
</div></body></html>
